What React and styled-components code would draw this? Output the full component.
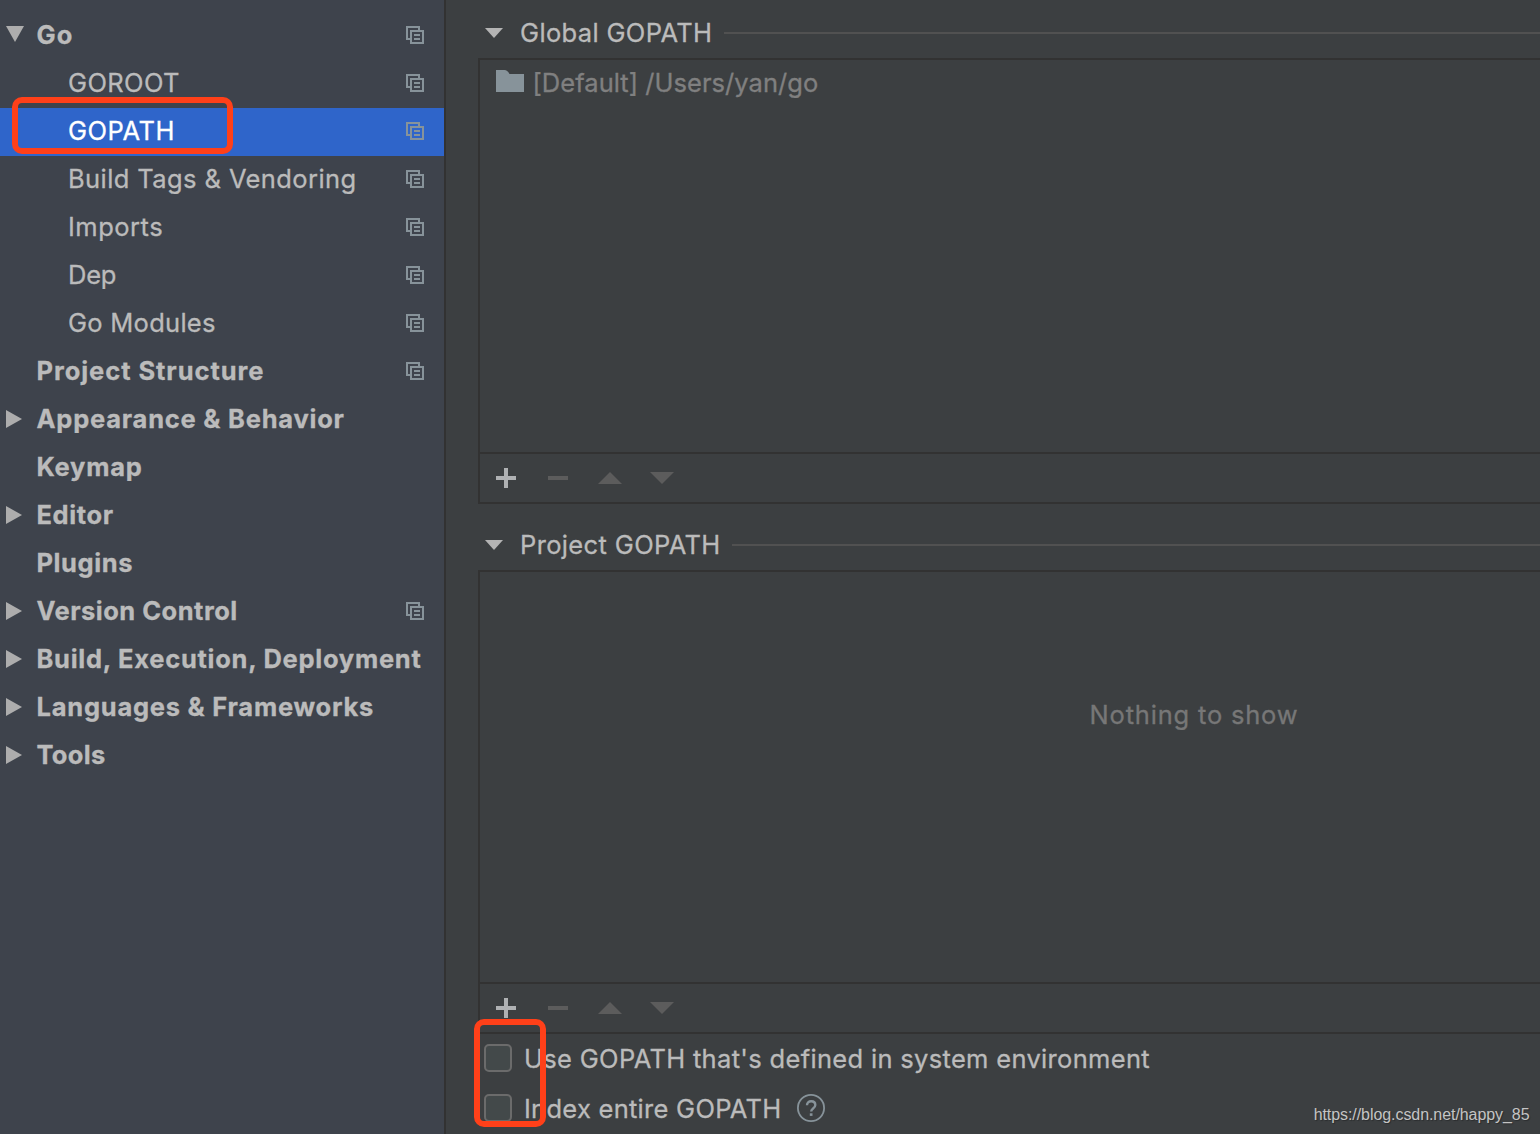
import React from 'react';
import styled, { createGlobalStyle } from 'styled-components';

const GlobalStyle = createGlobalStyle`
  body {
    margin: 0;
    background: #3c3f41;
    overflow: hidden;
  }
  * {
    box-sizing: border-box;
  }
`;

const Window = styled.div`
  position: relative;
  display: flex;
  width: 100vw;
  height: 100vh;
  overflow: hidden;
  background: #3c3f41;
  color: #bbbbbb;
  font-family: Inter, 'Liberation Sans', sans-serif;
  font-size: 25.5px;
  -webkit-text-stroke: 0.3px;
`;

const Sidebar = styled.nav`
  flex: none;
  width: 446px;
  padding-top: 12px;
  background: #3e434c;
  border-right: 2px solid #323232;
`;

const TreeRow = styled.div`
  display: flex;
  align-items: center;
  height: 48px;
  padding: 0 20px 2px 6px;
  color: ${(props) => (props.$selected ? '#ffffff' : 'inherit')};
  background: ${(props) => (props.$selected ? '#2f65ca' : 'transparent')};
`;

const ArrowSlot = styled.span`
  display: flex;
  flex: none;
  width: ${(props) => (props.$child ? '62px' : '30.5px')};
`;

const Label = styled.span`
  font-weight: ${(props) => (props.$bold ? 700 : 400)};
  letter-spacing: ${(props) => props.$track || 0}px;
  line-height: 46px;
  white-space: nowrap;
`;

const TreeLabel = styled(Label)`
  flex: 1;
  min-width: 0;
`;

const Main = styled.main`
  flex: 1;
  min-width: 0;
  padding: 8px 0 0 32px;
  overflow: hidden;
`;

const SectionHeader = styled.header`
  display: flex;
  align-items: center;
  height: 50px;
  padding-left: 7px;
`;

const SectionTitle = styled(Label)`
  margin: 0 ${(props) => props.$gap}px 0 17px;
`;

const Rule = styled.hr`
  flex: 1;
  height: 2px;
  margin: 0;
  border: 0;
  background: #515151;
`;

const Panel = styled.section`
  width: 1432px;
  margin-bottom: ${(props) => props.$after || 0}px;
  border: 2px solid #323232;
`;

const List = styled.div`
  height: ${(props) => props.$height}px;
`;

const PathRow = styled.div`
  display: flex;
  align-items: center;
  gap: 8.5px;
  height: 46px;
  padding-left: 16px;
  color: #808080;

  svg {
    margin-bottom: 4px;
  }
`;

const EmptyText = styled.p`
  margin: 0;
  padding-top: 120px;
  color: #777777;
  letter-spacing: 0.8px;
  line-height: 46px;
  text-align: center;
`;

const Toolbar = styled.div`
  display: flex;
  align-items: center;
  gap: 28px;
  height: 50px;
  padding-left: 14px;
  border-top: 2px solid #323232;
`;

const CheckRow = styled.label`
  display: flex;
  align-items: center;
  height: 50px;
  padding-left: 6px;

  svg {
    margin-bottom: 2px;
  }
`;

const CheckLabel = styled(Label)`
  margin: 0 16px 0 12px;
`;

const CheckBox = styled.span`
  flex: none;
  width: 28px;
  height: 28px;
  margin-bottom: 2px;
  border: 2px solid #6b6b6b;
  border-radius: 5px;
  background: #43494a;
`;

// red marker frames drawn over the window
const Marker = styled.div`
  position: absolute;
  border: 6px solid #ff4019;
  border-radius: 10px;
`;

const PathMarker = styled(Marker)`
  left: 12px;
  top: 97px;
  width: 221px;
  height: 57px;
`;

const ChecksMarker = styled(Marker)`
  left: 474px;
  top: 1018.5px;
  width: 72px;
  height: 108.5px;
`;

const Watermark = styled.span`
  position: absolute;
  right: 10.5px;
  top: 1105px;
  color: #c4c4c4;
  font: 16px/20px 'Liberation Sans', Arial, sans-serif;
  letter-spacing: -0.07px;
  text-shadow: 1px 1px 1px rgba(0, 0, 0, 0.3);
  -webkit-text-stroke: 0;
`;

const CopyIcon = () => (
  <svg width="18" height="18" fill="none" stroke="#87939a" strokeWidth="2">
    <path d="M4 13H1V1h12v3" />
    <path d="M5 5h12v12H5zM8 9h6M8 13h6" />
  </svg>
);

const TreeArrow = ({ open }) => (
  <svg width="18" height="18" fill="#adadad">
    <path d={open ? 'M0 0h18L9 16z' : 'M0 0v18l16-9z'} />
  </svg>
);

const SectionArrow = () => (
  <svg width="18" height="10" fill="#b4b4b4">
    <path d="M0 0h18L9 10z" />
  </svg>
);

const FolderIcon = () => (
  <svg width="28" height="22" fill="#87939a">
    <path d="M0 0h8.500c2 0 3.300 1 5 4H28v18H0z" />
  </svg>
);

const HelpIcon = () => (
  <svg width="28" height="28" fill="none" stroke="#87939a">
    <circle cx="14" cy="14" r="13.100" strokeWidth="1.800" />
    <path d="M10 11.200c0-2.500 1.700-4 4.200-4s4.100 1.500 4.100 3.700c0 1.600-.8 2.500-2.200 3.500-1.400 1-1.900 1.700-1.900 3.200" strokeWidth="2.400" />
    <path d="M12.800 20.600h2.700" strokeWidth="2.600" />
  </svg>
);

const toolShapes = [
  { name: 'add', color: '#afb1b3', d: 'M10 2h4v8h8v4h-8v8h-4v-8H2v-4h8z' },
  { name: 'remove', color: '#5c5c5c', d: 'M2 10h20v4H2z' },
  { name: 'up', color: '#5c5c5c', d: 'M12 6l12 12H0z' },
  { name: 'down', color: '#5c5c5c', d: 'M0 6h24L12 18z' },
];

const ListToolbar = () => (
  <Toolbar>
    {toolShapes.map(({ name, color, d }) => (
      <svg key={name} width="24" height="24" fill={color}>
        <path d={d} />
      </svg>
    ))}
  </Toolbar>
);

const Section = ({ title, track, gap, after, height, children }) => (
  <>
    <SectionHeader>
      <SectionArrow />
      <SectionTitle $track={track} $gap={gap}>
        {title}
      </SectionTitle>
      <Rule />
    </SectionHeader>
    <Panel $after={after}>
      <List $height={height}>{children}</List>
      <ListToolbar />
    </Panel>
  </>
);

const tree = [
  { text: 'Go', arrow: 'open', copy: true, track: 1 },
  { text: 'GOROOT', child: true, copy: true, track: 0.37 },
  { text: 'GOPATH', child: true, copy: true, selected: true, track: 0.55 },
  { text: 'Build Tags & Vendoring', child: true, copy: true, track: 0.4 },
  { text: 'Imports', child: true, copy: true, track: 0.5 },
  { text: 'Dep', child: true, copy: true, track: -0.2 },
  { text: 'Go Modules', child: true, copy: true, track: 0.27 },
  { text: 'Project Structure', copy: true, track: 0.94 },
  { text: 'Appearance & Behavior', arrow: 'closed', track: 0.77 },
  { text: 'Keymap', track: 0.75 },
  { text: 'Editor', arrow: 'closed', track: 0.62 },
  { text: 'Plugins', track: 0.58 },
  { text: 'Version Control', arrow: 'closed', copy: true, track: 0.49 },
  { text: 'Build, Execution, Deployment', arrow: 'closed', track: 0.73 },
  { text: 'Languages & Frameworks', arrow: 'closed', track: 0.76 },
  { text: 'Tools', arrow: 'closed', track: 0.3 },
];

const App = () => (
  <>
    <GlobalStyle />
    <Window>
      <Sidebar>
        {tree.map(({ text, arrow, child, copy, selected, track }) => (
          <TreeRow key={text} $selected={selected}>
            <ArrowSlot $child={child}>{arrow && <TreeArrow open={arrow === 'open'} />}</ArrowSlot>
            <TreeLabel $bold={!child} $track={track}>
              {text}
            </TreeLabel>
            {copy && <CopyIcon />}
          </TreeRow>
        ))}
      </Sidebar>
      <Main>
        <Section title="Global GOPATH" track={0.35} gap={11.5} after={16} height={392}>
          <PathRow>
            <FolderIcon />
            <Label $track={0.04}>[Default] /Users/yan/go</Label>
          </PathRow>
        </Section>
        <Section title="Project GOPATH" track={0.36} gap={11.5} height={410}>
          <EmptyText>Nothing to show</EmptyText>
        </Section>
        <CheckRow>
          <CheckBox />
          <CheckLabel $track={0.32}>Use GOPATH that&apos;s defined in system environment</CheckLabel>
        </CheckRow>
        <CheckRow>
          <CheckBox />
          <CheckLabel $track={0.27}>Index entire GOPATH</CheckLabel>
          <HelpIcon />
        </CheckRow>
      </Main>
      <PathMarker />
      <ChecksMarker />
      <Watermark>https://blog.csdn.net/happy_85</Watermark>
    </Window>
  </>
);

export default App;
